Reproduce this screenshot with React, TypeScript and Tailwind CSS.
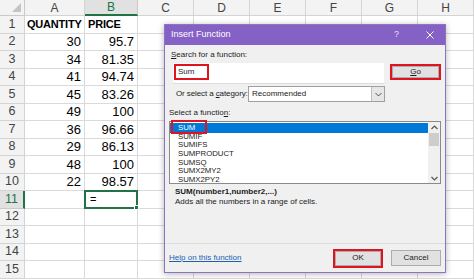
import React from "react";

const cols = ["A", "B", "C", "D", "E", "F", "G", "H"];
const data: [string, string][] = [
  ["30", "95.7"],
  ["34", "81.35"],
  ["41", "94.74"],
  ["45", "83.26"],
  ["49", "100"],
  ["36", "96.66"],
  ["29", "86.13"],
  ["48", "100"],
  ["22", "98.57"],
];
const funcs = ["SUMIF", "SUMIFS", "SUMPRODUCT", "SUMSQ", "SUMX2MY2", "SUMX2PY2"];

function Sheet() {
  const rows = Array.from({ length: 15 }, (_, i) => i + 1);
  return (
    <div className="grid grid-cols-[25px_60px_53px_56px_56px_56px_56px_56px_56px] grid-rows-[16px_repeat(15,17.5px)] w-[474px] h-[280px] overflow-hidden bg-white font-['Liberation_Sans',Arial,sans-serif]">
      <div className="relative bg-[#f3f3f3] border-r border-b border-[#c9c9c9]">
        <div className="absolute right-[3px] bottom-[3px] w-0 h-0 border-l-[9px] border-l-transparent border-b-[9px] border-b-[#c4c4c4]" />
      </div>
      {cols.map((c) => (
        <div
          key={c}
          className={
            c === "B"
              ? "flex items-center justify-center bg-[#e1e1e1] border-r border-[#c9c9c9] border-b-2 border-b-[#217346] text-[#217346] text-[12px]"
              : "flex items-center justify-center bg-[#f3f3f3] border-r border-b border-[#d4d4d4] text-[#444] text-[12px]"
          }
        >
          {c}
        </div>
      ))}
      {rows.map((r) => (
        <React.Fragment key={r}>
          <div
            className={
              r === 11
                ? "flex items-center justify-center bg-[#e1e1e1] border-b border-[#c9c9c9] border-r-2 border-r-[#217346] text-[#217346] text-[12.5px]"
                : "flex items-center justify-center bg-[#f3f3f3] border-r border-b border-[#d4d4d4] text-[#444] text-[12.5px]"
            }
          >
            {r}
          </div>
          {cols.map((c, ci) => {
            let content: React.ReactNode = null;
            const cls = "flex items-center border-r border-b border-[#dadada] text-[13px] text-black";
            if (r === 1 && ci === 0) {
              content = <span className="font-bold text-[11px] pl-[2px] tracking-[-0.2px]">QUANTITY</span>;
            } else if (r === 1 && ci === 1) {
              content = <span className="font-bold text-[11px] pl-[3px] tracking-[-0.2px]">PRICE</span>;
            } else if (r >= 2 && r <= 10 && ci === 0) {
              content = <span className="ml-auto pr-[3px]">{data[r - 2][0]}</span>;
            } else if (r >= 2 && r <= 10 && ci === 1) {
              content = <span className="ml-auto pr-[3px]">{data[r - 2][1]}</span>;
            }
            if (r === 11 && ci === 1) {
              return (
                <div key={c} className="relative flex items-center border-2 border-[#217346] -ml-[1px] -mt-[1px] text-[11px] text-black">
                  <span className="pl-[4px]">=</span>
                  <div className="absolute -right-[3px] -bottom-[3px] w-[5px] h-[5px] bg-[#217346] border border-white" />
                </div>
              );
            }
            return (
              <div key={c} className={cls}>
                {content}
              </div>
            );
          })}
        </React.Fragment>
      ))}
    </div>
  );
}

function Btn({ children, className }: { children: React.ReactNode; className: string }) {
  return (
    <div className={"flex items-center justify-center bg-[#e1e1e1] border border-[#adadad] " + className}>
      {children}
    </div>
  );
}

function Dialog() {
  return (
    <div className="absolute left-[164px] top-[24px] w-[282px] h-[249px] flex flex-col bg-[#f0f0f0] border border-[#8d73c0] shadow-[0_1px_6px_rgba(0,0,0,0.3)] font-['Liberation_Sans',Arial,sans-serif] text-[8px] text-[#1b1b1b]">
      <div className="h-[20px] shrink-0 flex items-center bg-[#8661c5] text-white pl-[6px]">
        <span className="text-[9px]">Insert Function</span>
        <span className="ml-auto text-[9px] text-[#e8defa]">?</span>
        <svg className="ml-[27px] mr-[11px]" width="8" height="8" viewBox="0 0 8 8">
          <path d="M0.5 0.5 L7.5 7.5 M7.5 0.5 L0.5 7.5" stroke="#ffffff" strokeWidth="1" />
        </svg>
      </div>
      <div className="flex flex-col flex-1 px-[4px]">
        <div className="h-[10px] mt-[5px] pl-[2px] leading-[10px]">
          <span className="underline">S</span>earch for a function:
        </div>
        <div className="flex mt-[3px] h-[21px]">
          <div className="relative ml-[4px] w-[212px] h-[21px] bg-white border-b border-[#dcdcdc]">
            <div className="absolute left-[1px] top-[1px] w-[35px] h-[16px] border-2 border-[#e0141e] flex items-center pl-[2px] text-[8px]">
              Sum
            </div>
          </div>
          <div className="ml-[6px] mt-[1px] w-[51px] h-[16px] border-2 border-[#e0141e] flex">
            <Btn className="flex-1 text-[8px]">
              <span className="underline">G</span>o
            </Btn>
          </div>
        </div>
        <div className="flex items-center mt-[2px] h-[16px]">
          <span className="pl-[7px] w-[79px] whitespace-nowrap tracking-[-0.1px]">
            Or select a <span className="underline">c</span>ategory:
          </span>
          <div className="flex items-center w-[137px] h-[16px] bg-white border border-[#a0a0a0]">
            <span className="pl-[3px]">Recommended</span>
            <div className="ml-auto w-[13px] h-full flex items-center justify-center bg-[#e6e6e6] border-l border-[#c0c0c0]">
              <svg width="7" height="5" viewBox="0 0 7 5">
                <path d="M0.5 1 L3.5 4 L6.5 1" fill="none" stroke="#555" strokeWidth="1" />
              </svg>
            </div>
          </div>
        </div>
        <div className="h-[10px] mt-[6px] leading-[10px]">
          Select a functio<span className="underline">n</span>:
        </div>
        <div className="relative flex mt-[3px] h-[63px] bg-white border border-[#8a8a8a]">
          <div className="flex flex-col flex-1 pt-[1px] text-[7.8px] leading-[8.7px]">
            <div className="relative h-[9.5px] bg-[#0078d7] text-white pl-[8px] leading-[9.5px]">SUM</div>
            {funcs.map((f) => (
              <div key={f} className="h-[8.7px] pl-[8px]">
                {f}
              </div>
            ))}
          </div>
          <div className="w-[12px] flex flex-col bg-[#f0f0f0]">
            <div className="h-[11px] flex items-center justify-center">
              <svg width="7" height="5" viewBox="0 0 7 5">
                <path d="M0.5 4 L3.5 1 L6.5 4" fill="none" stroke="#555" strokeWidth="1.2" />
              </svg>
            </div>
            <div className="mx-[1px] h-[13px] bg-[#cdcdcd]" />
            <div className="mt-auto h-[10px] flex items-center justify-center">
              <svg width="7" height="5" viewBox="0 0 7 5">
                <path d="M0.5 1 L3.5 4 L6.5 1" fill="none" stroke="#555" strokeWidth="1.2" />
              </svg>
            </div>
          </div>
          <div className="absolute left-[1px] -top-[2px] w-[36px] h-[14px] border-2 border-[#e0141e]" />
        </div>
        <div className="mt-[3px] pl-[6px] font-bold leading-[10px]">SUM(number1,number2,...)</div>
        <div className="pl-[6px] leading-[10px]">Adds all the numbers in a range of cells.</div>
      </div>
      <div className="h-[29px] shrink-0 flex items-center border-t border-[#dcdcdc] pl-[4px] pr-[4px]">
        <span className="text-[#1a5fb4] underline">Help on this function</span>
        <div className="ml-auto w-[50px] h-[19px] border-2 border-[#e0141e] flex">
          <Btn className="flex-1 text-[8px]">OK</Btn>
        </div>
        <Btn className="ml-[8px] w-[50px] h-[16px] text-[8px]">Cancel</Btn>
      </div>
    </div>
  );
}

export default function App() {
  return (
    <div className="relative w-[474px] h-[280px] overflow-hidden bg-white">
      <Sheet />
      <Dialog />
    </div>
  );
}
